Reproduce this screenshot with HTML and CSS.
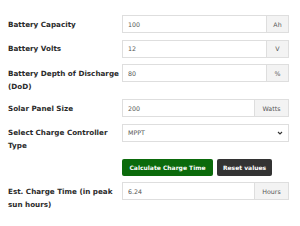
FILE: index.html
```html
<!DOCTYPE html>
<html lang="en">
<head>
    <meta charset="UTF-8">
    <meta name="viewport" content="width=device-width, initial-scale=1.0">
    <title>Solar Charge Time Calculator</title>
    <link rel="stylesheet" href="styles.css">
</head>
<body>
    <form class="calc">
        <label class="label">Battery Capacity</label>
        <div class="group">
            <input class="field" type="text" value="100">
            <span class="addon">Ah</span>
        </div>

        <label class="label">Battery Volts</label>
        <div class="group">
            <input class="field" type="text" value="12">
            <span class="addon">V</span>
        </div>

        <label class="label">Battery Depth of Discharge (DoD)</label>
        <div class="group">
            <input class="field" type="text" value="80">
            <span class="addon">%</span>
        </div>

        <label class="label">Solar Panel Size</label>
        <div class="group">
            <input class="field" type="text" value="200">
            <span class="addon wide">Watts</span>
        </div>

        <label class="label">Select Charge Controller Type</label>
        <div class="group">
            <div class="select">
                <span>MPPT</span>
                <svg width="6" height="4" viewBox="0 0 6 4"><path d="M1 1 L3 3 L5 1" fill="none" stroke="#333" stroke-width="1.1"/></svg>
            </div>
        </div>

        <div></div>
        <div class="buttons">
            <button type="button" class="btn calc-btn">Calculate Charge Time</button>
            <button type="button" class="btn reset-btn">Reset values</button>
        </div>

        <label class="label">Est. Charge Time (in peak sun hours)</label>
        <div class="group">
            <input class="field" type="text" value="6.24">
            <span class="addon wide">Hours</span>
        </div>
    </form>
</body>
</html>
```
FILE: styles.css
```css
*{
    box-sizing: border-box;
}
body{
    margin: 0;
    padding: 15px 11px 0 8px;
    background-color: #fff;
    font-family: "DejaVu Sans", "Noto Sans", sans-serif;
    color: #333;
}
.calc{
    display: grid;
    grid-template-columns: 114px 167px;
    row-gap: 6.5px;
    align-items: start;
}
.label{
    font-size: 7.2px;
    font-weight: bold;
    line-height: 13px;
    padding-top: 2.5px;
    padding-right: 1px;
    color: #2b2b2b;
}
.group{
    display: flex;
    height: 18px;
}
.field{
    flex: 1;
    min-width: 0;
    height: 18px;
    border: 1px solid #dedede;
    border-right: none;
    padding: 0 5px;
    font-family: inherit;
    font-size: 6.3px;
    color: #555;
    background: #fff;
    outline: none;
}
.addon{
    display: flex;
    align-items: center;
    justify-content: center;
    min-width: 23px;
    padding: 0 5px;
    border: 1px solid #dedede;
    background-color: #f3f3f3;
    font-size: 6.3px;
    color: #555;
}
.wide{
    width: 35px;
}
.select{
    flex: 1;
    display: flex;
    justify-content: space-between;
    align-items: center;
    border: 1px solid #dedede;
    padding: 0 5px;
    font-size: 6.3px;
    color: #555;
}
.buttons{
    display: flex;
    gap: 4px;
}
.btn{
    height: 17px;
    border: none;
    border-radius: 2px;
    padding: 0 3px;
    font-family: inherit;
    font-size: 6px;
    font-weight: bold;
    color: #fff;
    white-space: nowrap;
}
.calc-btn{
    width: 91px;
    background-color: #0b6a0b;
}
.reset-btn{
    width: 55px;
    background-color: #333;
}
```
